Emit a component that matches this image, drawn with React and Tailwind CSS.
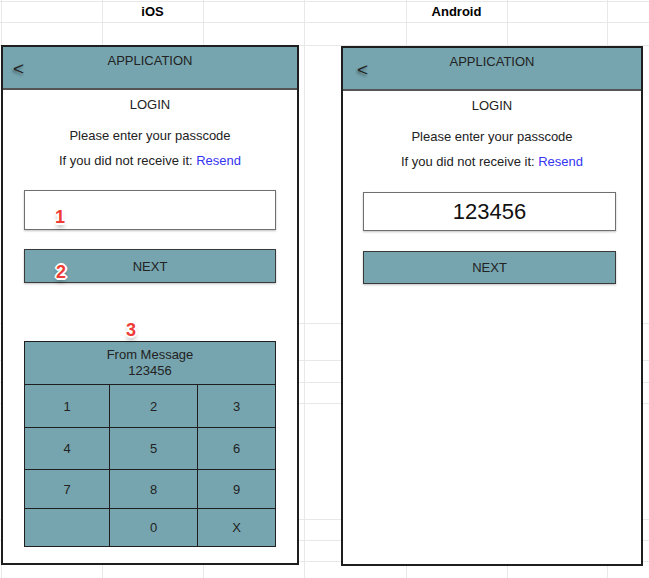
import React from 'react';

const H_LINES = [1, 22, 45, 323, 360, 382, 403, 519, 540, 561];
const V_LINES = [1, 102, 203, 304, 406, 507, 607];

function SheetGrid() {
  return (
    <svg className="absolute inset-0 pointer-events-none" width="649" height="578">
      {H_LINES.map((y) => (
        <line key={'h' + y} x1="0" x2="649" y1={y + 0.5} y2={y + 0.5} stroke="#e8e8e8" strokeWidth="1" />
      ))}
      {V_LINES.map((x) => (
        <line key={'v' + x} x1={x + 0.5} x2={x + 0.5} y1="0" y2="578" stroke="#e8e8e8" strokeWidth="1" />
      ))}
    </svg>
  );
}

// red numbered callout markers
function Marker({ n, className }) {
  return (
    <span
      className={
        'absolute -translate-x-1/2 -translate-y-1/2 leading-none text-[18px] font-bold text-[#ef3b36] ' +
        '[text-shadow:0_0_1px_#fff,0_0_2px_#fff,2px_0_0_#fff,-2px_0_0_#fff,0_2px_0_#fff,0_-2px_0_#fff,1px_1px_0_#fff,-1px_-1px_0_#fff,1px_-1px_0_#fff,-1px_1px_0_#fff,0_4px_4px_rgba(0,0,0,0.35)] ' +
        className
      }
    >
      {n}
    </span>
  );
}

function Keypad() {
  const rows = [
    { h: 'h-[43px]', keys: ['1', '2', '3'] },
    { h: 'h-[42px]', keys: ['4', '5', '6'] },
    { h: 'h-[39px]', keys: ['7', '8', '9'] },
    { h: 'h-[38px]', keys: ['', '0', 'X'] },
  ];
  return (
    <div className="relative mt-[58px] w-[252px] border border-[#1f1f1f] bg-[#76a5af] text-[13px] text-[#222]">
      <Marker n="3" className="left-[106px] top-[-12px]" />
      <div className="h-[42px] flex flex-col items-center justify-center leading-[16px]">
        <span>From Message</span>
        <span>123456</span>
      </div>
      {rows.map((r, i) => (
        <div key={i} className={'grid grid-cols-[85px_88px_1fr] border-t border-[#1f1f1f] ' + r.h}>
          {r.keys.map((k, j) => (
            <div
              key={j}
              className={'flex items-center justify-center ' + (j < 2 ? 'border-r border-[#1f1f1f]' : '')}
            >
              {k}
            </div>
          ))}
        </div>
      ))}
    </div>
  );
}

function Phone({ ios }) {
  return (
    <div
      className={
        'h-[520px] border-2 border-[#1e1e1e] bg-white flex flex-col ' +
        (ios ? 'w-[298px]' : 'w-[302px] mt-[1px]')
      }
    >
      {/* app bar */}
      <div className="h-[43px] shrink-0 grid grid-cols-[40px_1fr_40px] bg-[#76a5af] border-b-2 border-[#555]">
        <div
          className={
            'pt-[12px] text-[19px] leading-[19px] text-[#222] [text-shadow:-1px_2px_3px_rgba(0,0,0,0.45)] ' +
            (ios ? 'pl-[10px]' : 'pl-[14px]')
          }
        >
          &lt;
        </div>
        <div className="pt-[6px] text-center text-[13px] leading-[15px] text-[#222]">APPLICATION</div>
        <div />
      </div>

      {/* body */}
      <div className="flex flex-col text-[13px] leading-[15px] text-[#222]">
        <div className="mt-[7px] text-center">LOGIN</div>
        <div className="mt-[16px] text-center">Please enter your passcode</div>
        <div className="mt-[10px] text-center">
          If you did not receive it: <span className="text-[#3535f2]">Resend</span>
        </div>

        <div className={ios ? 'pl-[21px]' : 'pl-[20px]'}>
          <div
            className={
              'relative border border-[#6f6f6f] bg-white shadow-[0_1px_2px_rgba(0,0,0,0.25)] flex items-center justify-center ' +
              (ios ? 'mt-[22px] h-[40px] w-[252px]' : 'mt-[23px] h-[39px] w-[253px]')
            }
          >
            {ios ? (
              <Marker n="1" className="left-[35px] top-[26px]" />
            ) : (
              <span className="text-[22px] leading-none text-[#111]">123456</span>
            )}
          </div>

          <div
            className={
              'relative border border-[#3a3a3a] bg-[#76a5af] shadow-[0_1px_2px_rgba(0,0,0,0.25)] flex items-center justify-center ' +
              (ios ? 'mt-[19px] h-[34px] w-[252px]' : 'mt-[20px] h-[33px] w-[253px]')
            }
          >
            NEXT
            {ios && <Marker n="2" className="left-[36px] top-[22px]" />}
          </div>

          {ios && <Keypad />}
        </div>
      </div>
    </div>
  );
}

export default function App() {
  return (
    <div className="relative w-[649px] h-[578px] overflow-hidden bg-white font-['Liberation_Sans',Arial,sans-serif]">
      <SheetGrid />
      <div className="relative">
        <div className="flex h-[22px] items-center pt-[2px] text-[13px] font-bold text-black">
          <div className="w-[102px]" />
          <div className="w-[101px] text-center">iOS</div>
          <div className="w-[203px]" />
          <div className="w-[101px] text-center">Android</div>
        </div>
        <div className="flex gap-[42px] pl-[1px] pt-[23px]">
          <Phone ios />
          <Phone />
        </div>
      </div>
    </div>
  );
}
